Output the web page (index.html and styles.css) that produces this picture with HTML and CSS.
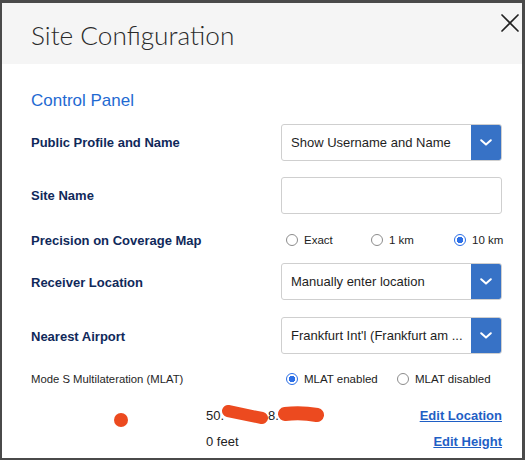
FILE: index.html
```html
<!DOCTYPE html>
<html lang="en">
<head>
<meta charset="utf-8">
<title>Site Configuration</title>
<link rel="stylesheet" href="styles.css">
</head>
<body>
<div class="modal">
  <header class="head">
    <h1 class="title">Site Configuration</h1>
    <button class="close" aria-label="Close">
      <svg width="18" height="18" viewBox="0 0 18 18"><path d="M1 1 L17 17 M17 1 L1 17" stroke="#222" stroke-width="1.7" fill="none" stroke-linecap="round"/></svg>
    </button>
  </header>
  <main class="content">
    <h2 class="section">Control Panel</h2>

    <div class="row r-profile">
      <span class="lbl">Public Profile and Name</span>
      <div class="select">
        <span class="sel-text">Show Username and Name</span>
        <span class="sel-btn"><svg width="12" height="7" viewBox="0 0 12 7"><path d="M1.2 1.2 L6 5.6 L10.8 1.2" stroke="#fff" stroke-width="2" fill="none" stroke-linecap="round" stroke-linejoin="round"/></svg></span>
      </div>
    </div>

    <div class="row r-name">
      <span class="lbl">Site Name</span>
      <div class="input"></div>
    </div>

    <div class="row r-prec">
      <span class="lbl">Precision on Coverage Map</span>
      <div class="radios three">
        <span class="radio"><span class="dot"></span>Exact</span>
        <span class="radio"><span class="dot"></span>1 km</span>
        <span class="radio"><span class="dot on"></span>10 km</span>
      </div>
    </div>

    <div class="row r-loc">
      <span class="lbl">Receiver Location</span>
      <div class="select">
        <span class="sel-text">Manually enter location</span>
        <span class="sel-btn"><svg width="12" height="7" viewBox="0 0 12 7"><path d="M1.2 1.2 L6 5.6 L10.8 1.2" stroke="#fff" stroke-width="2" fill="none" stroke-linecap="round" stroke-linejoin="round"/></svg></span>
      </div>
    </div>

    <div class="row r-air">
      <span class="lbl">Nearest Airport</span>
      <div class="select">
        <span class="sel-text">Frankfurt Int'l (Frankfurt am ...</span>
        <span class="sel-btn"><svg width="12" height="7" viewBox="0 0 12 7"><path d="M1.2 1.2 L6 5.6 L10.8 1.2" stroke="#fff" stroke-width="2" fill="none" stroke-linecap="round" stroke-linejoin="round"/></svg></span>
      </div>
    </div>

    <div class="row r-mlat">
      <span class="lbl-small">Mode S Multilateration (MLAT)</span>
      <div class="radios two">
        <span class="radio"><span class="dot on"></span>MLAT enabled</span>
        <span class="radio"><span class="dot"></span>MLAT disabled</span>
      </div>
    </div>

    <div class="loc">
      <span class="marker"></span>
      <span class="coord">50.<svg class="redact r1" width="50" height="24" viewBox="0 0 50 24"><path d="M7 8 L41 15" stroke="#ec4a1f" stroke-width="12" stroke-linecap="round" fill="none"/></svg>8.<svg class="redact r2" width="48" height="24" viewBox="0 0 48 24"><path d="M8 11 Q24 9 40 12" stroke="#ec4a1f" stroke-width="14" stroke-linecap="round" fill="none"/></svg></span>
      <a class="edit" href="#">Edit Location</a>
      <span class="coord h">0 feet</span>
      <a class="edit" href="#">Edit Height</a>
    </div>
  </main>
</div>
</body>
</html>
```

FILE: styles.css
```css
html, body {
  margin: 0;
  padding: 0;
  background: #4a4a4a;
}
body {
  padding: 3px 3px 2px 2px;
  width: 525px;
  height: 460px;
  box-sizing: border-box;
  font-family: "Liberation Sans", Arial, sans-serif;
}
.modal {
  width: 520px;
  height: 455px;
  background: #fff;
  overflow: hidden;
}
.head {
  height: 61px;
  background: #f5f5f5;
  display: flex;
  justify-content: space-between;
  align-items: flex-start;
  padding: 0 3px 0 29px;
  box-sizing: border-box;
}
.title {
  margin: 15px 0 0 0;
  font-family: Lato, "Open Sans", sans-serif;
  font-weight: 300;
  font-size: 26.2px;
  line-height: 34px;
  color: #2a2a2a;
}
.close {
  margin-top: 11px;
  padding: 0;
  border: 0;
  background: transparent;
  width: 18px;
  height: 18px;
  display: flex;
}
.content {
  padding: 28px 20px 0 29px;
}
.section {
  margin: 0;
  font-size: 17px;
  line-height: 18px;
  font-weight: 400;
  color: #1f6ad2;
}
.row {
  display: grid;
  grid-template-columns: 250px 221px;
  align-items: center;
}
.r-profile { margin-top: 14px; height: 37px; }
.r-name { margin-top: 16px; height: 37px; }
.r-prec { margin-top: 18px; height: 16px; }
.r-loc { margin-top: 15px; height: 37px; }
.r-air { margin-top: 17px; height: 37px; }
.r-mlat { margin-top: 17px; height: 16px; }
.r-loc .lbl, .r-air .lbl { padding-top: 2px; }

.lbl {
  font-size: 13px;
  font-weight: 700;
  color: #10295a;
}
.lbl-small {
  font-size: 11.3px;
  color: #262626;
}
.select {
  height: 37px;
  box-sizing: border-box;
  border: 1px solid #cfcfcf;
  border-radius: 3px;
  display: flex;
  align-items: stretch;
  overflow: hidden;
}
.sel-text {
  flex: 1;
  display: flex;
  align-items: center;
  padding-left: 9px;
  font-size: 13px;
  color: #1e1e1e;
  white-space: nowrap;
  overflow: hidden;
}
.sel-btn {
  width: 30px;
  background: #3772c6;
  display: flex;
  align-items: center;
  justify-content: center;
}
.input {
  height: 37px;
  box-sizing: border-box;
  border: 1px solid #cfcfcf;
  border-radius: 3px;
}
.radios {
  display: grid;
  align-items: center;
  padding-left: 5px;
  font-size: 11.5px;
  color: #222;
}
.radios.three { grid-template-columns: 85px 83px 1fr; }
.radios.two { grid-template-columns: 111px 1fr; }
.radio {
  display: flex;
  align-items: center;
  gap: 6px;
  white-space: nowrap;
}
.dot {
  width: 12px;
  height: 12px;
  box-sizing: border-box;
  border: 1px solid #8c8c8c;
  border-radius: 50%;
  background: #fff;
  flex: none;
}
.dot.on {
  border: 1.5px solid #2c6fe6;
  background: radial-gradient(circle, #2c6fe6 0 3px, #fff 3.5px);
}
.loc {
  margin-top: 18px;
  display: grid;
  grid-template-columns: 175px 1fr auto;
  grid-template-rows: 20px 20px;
  row-gap: 6px;
  align-items: center;
  font-size: 13px;
  color: #222;
}
.marker {
  grid-row: 1;
  grid-column: 1;
  width: 14px;
  height: 14px;
  border-radius: 50%;
  background: #ec4a1f;
  margin-left: 83px;
  transform: translateY(5px);
}
.coord {
  grid-column: 2;
  display: flex;
  align-items: center;
  white-space: nowrap;
  height: 20px;
}
.coord.h { grid-row: 2; }
.redact { flex: none; }
.redact.r1 { margin: 0 -3px 0 -3px; }
.redact.r2 { margin-left: -2px; }
.edit {
  grid-column: 3;
  justify-self: end;
  font-size: 13px;
  font-weight: 700;
  color: #1f5fc5;
  text-decoration: underline;
}
```
